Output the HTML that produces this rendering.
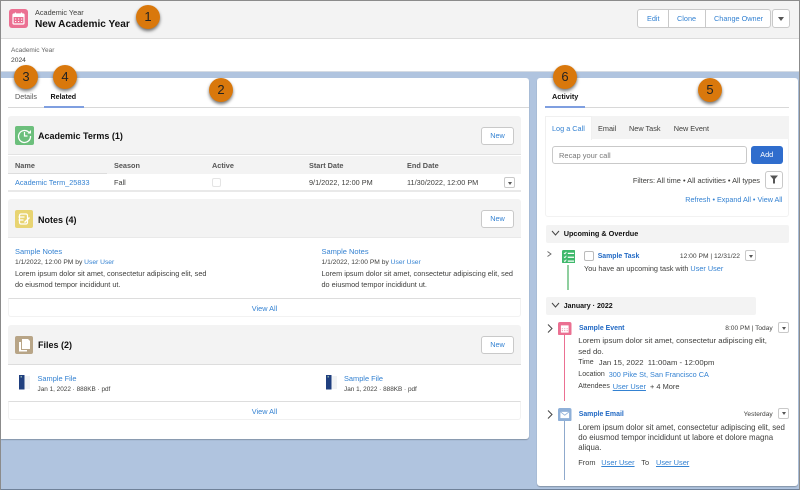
<!DOCTYPE html>
<html lang="en"><head><meta charset="utf-8"><title>Academic Year</title>
<style>
html,body{margin:0;padding:0}
body{width:800px;height:490px;overflow:hidden;position:relative;background:#b0c4df;font-family:"Liberation Sans",sans-serif;color:#3e3e3c;font-size:7.3px}
.a,.t{position:absolute}
.t{white-space:nowrap;line-height:11px}
.l{color:#3482d2}
.u{text-decoration:underline}
.b{font-weight:bold;color:#111}
.s{font-weight:bold;color:#555}
.k{font-weight:bold;color:#2169c4}
.g{background:#f3f3f3}
.btn{position:absolute;box-sizing:border-box;background:#fff;border:1px solid #c9c9c9;border-radius:3px;color:#3482d2;text-align:center;font-size:7.3px}
.dd{position:absolute;box-sizing:border-box;width:11px;height:11px;background:#fff;border:1px solid #c9c9c9;border-radius:2px}
.dd:after{content:"";position:absolute;left:2.500px;top:3.500px;border:2.500px solid transparent;border-top:3px solid #555;border-bottom:0}
.num{position:absolute;width:24px;height:24px;border-radius:50%;background:#d9780c;color:#222;text-align:center;line-height:24px;font-size:13px;box-shadow:0 2px 3px rgba(0,0,0,.55)}
.h{font-size:9px;font-weight:bold;color:#111}
.n{font-size:7.3px}
.m{font-size:6.7px}
.e{font-size:7.75px}
.f{font-size:7.88px}
</style></head><body>

<!-- outer frame -->
<div class="a" style="left:0;top:0;width:800px;height:1px;background:#8b8b8b"></div>
<div class="a" style="left:0;top:0;width:1px;height:490px;background:#8b8b8b;z-index:5"></div>
<div class="a" style="left:0;top:489px;width:800px;height:1px;background:#6f8199"></div>
<div class="a" style="left:799px;top:0;width:1px;height:490px;background:#8b8b8b"></div>

<!-- header -->
<div class="a g" style="left:1px;top:1px;width:798px;height:37px;border-bottom:1px solid #dcdcdc"></div>
<div class="a" style="left:1px;top:39px;width:798px;height:32px;background:#fff;border-bottom:1px solid #d5dbe3"></div>
<svg class="a" style="left:9px;top:9px" width="19" height="19" viewBox="0 0 19 19"><rect width="19" height="19" rx="3" fill="#eb7092"/><rect x="4" y="5" width="11" height="10" rx="1" fill="none" stroke="#fff" stroke-width="1.2"/><rect x="4" y="5" width="11" height="3" fill="#fff"/><path d="M6.5 3.500v2.500M12.500 3.500v2.500" stroke="#fff" stroke-width="1.2"/><path d="M6 10h1.200M9 10h1.200M12 10h1.200M6 12.500h1.200M9 12.500h1.200M12 12.500h1.200" stroke="#fff"/></svg>
<div class="t" style="left:35px;top:6.500px;font-size:7.300px">Academic Year</div>
<div class="t b" style="left:35px;top:19px;font-size:10.100px;line-height:12px">New Academic Year</div>
<div class="a" style="left:637px;top:9px;width:134px;height:18.500px;box-sizing:border-box;background:#fff;border:1px solid #c9c9c9;border-radius:3px"></div>
<div class="a" style="left:667.500px;top:10px;width:1px;height:17px;background:#c9c9c9"></div>
<div class="a" style="left:704.500px;top:10px;width:1px;height:17px;background:#c9c9c9"></div>
<div class="t l" style="left:647px;top:13px">Edit</div>
<div class="t l" style="left:677px;top:13px">Clone</div>
<div class="t l" style="left:714px;top:13px">Change Owner</div>
<div class="a" style="left:771.500px;top:9px;width:18px;height:18.500px;box-sizing:border-box;background:#fff;border:1px solid #c9c9c9;border-radius:3px"></div>
<div class="a" style="left:778px;top:16.500px;border:3px solid transparent;border-top:4px solid #555;border-bottom:0"></div>
<div class="t" style="left:11px;top:44.500px;font-size:6.500px;color:#666">Academic Year</div>
<div class="t" style="left:11px;top:55px;font-size:6.700px">2024</div>

<!-- left card -->
<div class="a" style="left:1px;top:78px;width:528px;height:361px;background:#fff;border-radius:0 3px 3px 0;box-shadow:0 1px 1px rgba(0,0,0,.25)"></div>
<div class="t" style="left:15px;top:91px;color:#555;font-size:7.200px">Details</div>
<div class="t b" style="left:50.500px;top:91.500px;font-size:7.100px">Related</div>
<div class="a" style="left:8px;top:107px;width:521px;height:1px;background:#d8d8d8"></div>
<div class="a" style="left:44px;top:106px;width:40px;height:2px;background:#7f9fe0"></div>

<!-- Academic terms -->
<div class="a g" style="left:8px;top:116px;width:513px;height:38px;border-radius:3px 3px 0 0;border-bottom:1px solid #e3e3e3"></div>
<div class="a g" style="left:8px;top:156px;width:513px;height:18px"></div>
<div class="a" style="left:8px;top:173px;width:99px;height:1px;background:#ddd"></div>
<div class="a" style="left:8px;top:190px;width:513px;height:1.500px;background:#e9e9e9"></div>
<svg class="a" style="left:15px;top:126px" width="19" height="19" viewBox="0 0 19 19"><rect width="19" height="19" rx="2" fill="#6cbf7c"/><path d="M14 6.500a6 6 0 1 0 1.500 3.500" fill="none" stroke="#fff" stroke-width="1.300"/><path d="M9.500 6v4h3" fill="none" stroke="#fff" stroke-width="1.200"/><path d="M12.500 7.500h3.500v-3.500z" fill="#fff"/></svg>
<div class="t h" style="left:38px;top:131px">Academic Terms (1)</div>
<div class="btn" style="left:481px;top:127px;width:33px;height:17.500px;line-height:15.500px">New</div>
<div class="t s" style="left:15px;top:160px">Name</div>
<div class="t s" style="left:114px;top:160px">Season</div>
<div class="t s" style="left:212px;top:160px">Active</div>
<div class="t s" style="left:309px;top:160px">Start Date</div>
<div class="t s" style="left:407px;top:160px">End Date</div>
<div class="t l" style="left:15px;top:177px">Academic Term_25833</div>
<div class="t" style="left:114px;top:177px">Fall</div>
<div class="a" style="left:212px;top:178px;width:7px;height:7px;border:1px solid #e4e4e4;border-radius:2px"></div>
<div class="t" style="left:309px;top:177px">9/1/2022, 12:00 PM</div>
<div class="t" style="left:407px;top:177px">11/30/2022, 12:00 PM</div>
<div class="dd" style="left:504px;top:177px"></div>

<!-- Notes -->
<div class="a g" style="left:8px;top:199px;width:513px;height:38px;border-radius:3px 3px 0 0;border-bottom:1px solid #e9e9e9"></div>
<svg class="a" style="left:15px;top:210px" width="18" height="18" viewBox="0 0 18 18"><rect width="18" height="18" rx="2" fill="#e8d472"/><rect x="4.500" y="4" width="8" height="10" rx="1.500" fill="none" stroke="#fff" stroke-width="1.200"/><path d="M3.500 7h6M3.500 10h5" stroke="#fff" stroke-width="1.200"/><path d="M9 12l5-5 1 1-5 5z" fill="#fff"/></svg>
<div class="t h" style="left:38px;top:214.500px">Notes (4)</div>
<div class="btn" style="left:481px;top:210px;width:33px;height:18px;line-height:16px">New</div>
<div class="t l" style="left:15px;top:246px;font-size:7.500px">Sample Notes</div>
<div class="t m" style="left:15px;top:257px">1/1/2022, 12:00 PM by <span class="l">User User</span></div>
<div class="t" style="left:15px;top:268px">Lorem ipsum dolor sit amet, consectetur adipiscing elit, sed</div>
<div class="t" style="left:15px;top:279px">do eiusmod tempor incididunt ut.</div>
<div class="t l" style="left:321.500px;top:246px;font-size:7.500px">Sample Notes</div>
<div class="t m" style="left:321.500px;top:257px">1/1/2022, 12:00 PM by <span class="l">User User</span></div>
<div class="t" style="left:321.500px;top:268px">Lorem ipsum dolor sit amet, consectetur adipiscing elit, sed</div>
<div class="t" style="left:321.500px;top:279px">do eiusmod tempor incididunt ut.</div>
<div class="a" style="left:8px;top:298px;width:513px;height:19px;box-sizing:border-box;border-top:1px solid #ddd;border-right:1px solid #f2f2f2;border-left:1px solid #f2f2f2;border-bottom:1px solid #f2f2f2;border-radius:0 0 3px 3px;text-align:center;line-height:19px;color:#3482d2">View All</div>

<!-- Files -->
<div class="a g" style="left:8px;top:325px;width:513px;height:39px;border-radius:3px 3px 0 0;border-bottom:1px solid #ddd"></div>
<svg class="a" style="left:15px;top:336px" width="18" height="18" viewBox="0 0 18 18"><rect width="18" height="18" rx="2" fill="#b8a587"/><path d="M7 3h6l2 2v8H7z" fill="#fff"/><path d="M4 6h2v8h6v1.500H4z" fill="#fff"/></svg>
<div class="t h" style="left:38px;top:340px">Files (2)</div>
<div class="btn" style="left:481px;top:336px;width:33px;height:18px;line-height:16px">New</div>
<svg class="a" style="left:19px;top:374.500px" width="12" height="15" viewBox="0 0 12 15"><rect x="5" y="1" width="6" height="13" fill="#f1f3f5"/><rect width="5.500" height="14.500" fill="#1f3f7f"/><rect x="1.500" y="1" width="1.500" height="1.500" fill="#8aa"/></svg>
<div class="t l" style="left:37.500px;top:372.500px;font-size:7.400px">Sample File</div>
<div class="t" style="left:37.500px;top:384px;font-size:6.400px">Jan 1, 2022 · 888KB · pdf</div>
<svg class="a" style="left:325.500px;top:374.500px" width="12" height="15" viewBox="0 0 12 15"><rect x="5" y="1" width="6" height="13" fill="#f1f3f5"/><rect width="5.500" height="14.500" fill="#1f3f7f"/><rect x="1.500" y="1" width="1.500" height="1.500" fill="#8aa"/></svg>
<div class="t l" style="left:344px;top:372.500px;font-size:7.400px">Sample File</div>
<div class="t" style="left:344px;top:384px;font-size:6.400px">Jan 1, 2022 · 888KB · pdf</div>
<div class="a" style="left:8px;top:401px;width:513px;height:19px;box-sizing:border-box;border-top:1.500px solid #ddd;border-right:1px solid #f2f2f2;border-left:1px solid #f2f2f2;border-bottom:1.500px solid #f0f0f0;border-radius:0 0 3px 3px;text-align:center;line-height:19px;color:#3482d2">View All</div>

<!-- right card -->
<div class="a" style="left:537px;top:78px;width:261px;height:408px;background:#fff;border-radius:3px;box-shadow:0 1px 1px rgba(0,0,0,.25)"></div>
<div class="t b" style="left:552px;top:91px;font-size:7.300px">Activity</div>
<div class="a" style="left:545px;top:107px;width:244px;height:1px;background:#d8d8d8"></div>
<div class="a" style="left:545px;top:106px;width:40px;height:2px;background:#7f9fe0"></div>

<div class="a" style="left:545px;top:116px;width:244px;height:101px;box-sizing:border-box;border:1px solid #f2f2f2;border-radius:3px"></div>
<div class="a g" style="left:592px;top:116px;width:197px;height:23px"></div>
<div class="a" style="left:545px;top:116px;width:47px;height:24px;background:#fff;border:1px solid #f0f0f0;border-bottom:0;box-sizing:border-box"></div>
<div class="t l" style="left:552px;top:122.500px">Log a Call</div>
<div class="t" style="left:598px;top:122.500px">Email</div>
<div class="t" style="left:629px;top:122.500px">New Task</div>
<div class="t" style="left:673.700px;top:122.500px">New Event</div>
<div class="a" style="left:552px;top:146px;width:195px;height:18px;box-sizing:border-box;background:#fff;border:1px solid #c9c9c9;border-radius:3px"></div>
<div class="t" style="left:559px;top:149.500px;color:#777;font-size:7.500px">Recap your call</div>
<div class="a" style="left:751px;top:146px;width:31.500px;height:18px;background:#2f6dcd;border-radius:3px;color:#fff;text-align:center;line-height:18px">Add</div>
<div class="t" style="right:40px;top:174.500px;font-size:7.400px">Filters: All time • All activities • All types</div>
<div class="a" style="left:765px;top:170.500px;width:17.500px;height:18px;box-sizing:border-box;border:1px solid #c9c9c9;border-radius:3px;background:#fff"></div>
<svg class="a" style="left:769px;top:175px" width="10" height="9" viewBox="0 0 10 9"><path d="M1 .5h8L6 4v4.500H4V4z" fill="#555"/></svg>
<div class="t l" style="right:17.500px;top:193.500px;font-size:7.200px">Refresh • Expand All • View All</div>

<!-- Upcoming -->
<div class="a g" style="left:545.500px;top:225px;width:243.500px;height:18px;border-radius:2px"></div>
<svg class="a" style="left:551px;top:230px" width="9" height="7" viewBox="0 0 9 7"><path d="M1 1l3.500 4L8 1" fill="none" stroke="#444" stroke-width="1"/></svg>
<div class="t b" style="left:563.700px;top:227.500px">Upcoming &amp; Overdue</div>
<svg class="a" style="left:547px;top:250.500px" width="5" height="6" viewBox="0 0 5 6"><path d="M.5.5l3.500 2.500-3.500 2.500" fill="none" stroke="#666" stroke-width=".9"/></svg>
<svg class="a" style="left:561.500px;top:249.500px" width="13.500" height="13.500" viewBox="0 0 14 14"><rect width="14" height="14" rx="1.500" fill="#3fb86b"/><path d="M2 3l1 1 1.500-2M2 7l1 1 1.500-2M2 11l1 1 1.500-2" fill="none" stroke="#fff" stroke-width=".9"/><path d="M6 3.500h6.500M6 7.500h6.500M6 11.500h6.500" stroke="#fff" stroke-width="1.300"/></svg>
<div class="a" style="left:567px;top:265px;width:1.500px;height:25px;background:#8fcf9f"></div>
<div class="a" style="left:584px;top:251px;width:7.500px;height:7.500px;border:1px solid #bbb;border-radius:2px;background:#fff"></div>
<div class="t k" style="left:597.700px;top:250.500px;font-size:6.900px">Sample Task</div>
<div class="t" style="right:60px;top:250.500px;font-size:6.700px">12:00 PM | 12/31/22</div>
<div class="dd" style="left:745px;top:250px"></div>
<div class="t" style="left:584px;top:263px">You have an upcoming task with <span class="l">User User</span></div>

<!-- January -->
<div class="a g" style="left:545.500px;top:297px;width:210.500px;height:17.500px;border-radius:2px"></div>
<svg class="a" style="left:551px;top:302px" width="9" height="7" viewBox="0 0 9 7"><path d="M1 1l3.500 4L8 1" fill="none" stroke="#444" stroke-width="1"/></svg>
<div class="t b" style="left:563.700px;top:300.500px;font-size:7.050px">January · 2022</div>
<svg class="a" style="left:547px;top:323.500px" width="6" height="9" viewBox="0 0 6 9"><path d="M1 .5l4 4-4 4" fill="none" stroke="#444" stroke-width="1"/></svg>
<svg class="a" style="left:558px;top:321.500px" width="13.500" height="13.500" viewBox="0 0 14 14"><rect width="14" height="14" rx="2" fill="#eb7092"/><rect x="3" y="3.500" width="8" height="7.500" fill="#fff"/><path d="M4 7h1M6.500 7h1M9 7h1M4 9h1M6.500 9h1M9 9h1" stroke="#eb7092" stroke-width=".9"/></svg>
<div class="a" style="left:563.700px;top:335px;width:1.500px;height:66px;background:#eb7092"></div>
<div class="t k" style="left:579px;top:323px;font-size:6.950px">Sample Event</div>
<div class="t" style="right:27.300px;top:323px;font-size:6.600px">8:00 PM | Today</div>
<div class="dd" style="left:778px;top:322px"></div>
<div class="t e" style="left:578.300px;top:335px">Lorem ipsum dolor sit amet, consectetur adipiscing elit,</div>
<div class="t e" style="left:578.300px;top:345.500px">sed do.</div>
<div class="t" style="left:578.300px;top:357px;font-size:7px">Time</div>
<div class="t e" style="left:598.700px;top:357px">Jan 15, 2022&nbsp; 11:00am - 12:00pm</div>
<div class="t" style="left:578.300px;top:368.500px;font-size:7px">Location</div>
<div class="t l" style="left:608.700px;top:368.500px">300 Pike St, San Francisco CA</div>
<div class="t" style="left:578.300px;top:380.500px;font-size:7px">Attendees</div>
<div class="t" style="left:612.700px;top:380.500px;font-size:7.400px"><span class="l u">User User</span>&nbsp; + 4 More</div>

<!-- Email -->
<svg class="a" style="left:547px;top:410px" width="6" height="9" viewBox="0 0 6 9"><path d="M1 .5l4 4-4 4" fill="none" stroke="#444" stroke-width="1"/></svg>
<svg class="a" style="left:558px;top:407.700px" width="13.500" height="13.500" viewBox="0 0 14 14"><rect width="14" height="14" rx="2" fill="#8fb0d8"/><rect x="2.500" y="4" width="9" height="6.500" fill="#fff"/><path d="M2.500 4L7 7.500 11.500 4" fill="none" stroke="#8fb0d8" stroke-width=".8"/></svg>
<div class="a" style="left:563.700px;top:421px;width:1.500px;height:58.500px;background:#8fa9cc"></div>
<div class="t k" style="left:578.700px;top:409px;font-size:6.950px">Sample Email</div>
<div class="t" style="right:27.300px;top:409px;font-size:6.600px">Yesterday</div>
<div class="dd" style="left:778px;top:407.700px"></div>
<div class="t f" style="left:578.300px;top:421.500px">Lorem ipsum dolor sit amet, consectetur adipiscing elit, sed</div>
<div class="t f" style="left:578.300px;top:431.800px">do eiusmod tempor incididunt ut labore et dolore magna</div>
<div class="t f" style="left:578.300px;top:442.200px">aliqua.</div>
<div class="t" style="left:578.300px;top:456.800px;font-size:7.400px">From</div>
<div class="t l u" style="left:601.300px;top:456.800px;font-size:7.400px">User User</div>
<div class="t" style="left:641.300px;top:456.800px;font-size:7.400px">To</div>
<div class="t l u" style="left:656px;top:456.800px;font-size:7.400px">User User</div>

<!-- callouts -->
<div class="num" style="left:136px;top:5px">1</div>
<div class="num" style="left:209px;top:78px">2</div>
<div class="num" style="left:14px;top:65px">3</div>
<div class="num" style="left:53px;top:65px">4</div>
<div class="num" style="left:698px;top:78px">5</div>
<div class="num" style="left:553px;top:65px">6</div>
</body></html>
